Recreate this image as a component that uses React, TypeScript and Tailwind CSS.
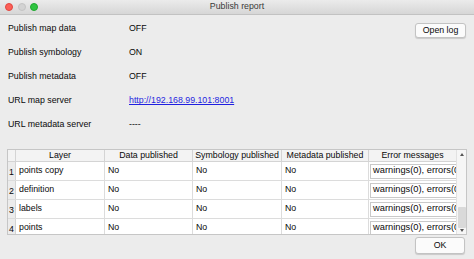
import React from "react";

const rows = [
  { n: 1, layer: "points copy" },
  { n: 2, layer: "definition" },
  { n: 3, layer: "labels" },
  { n: 4, layer: "points" },
];

const info: { label: string; value: React.ReactNode }[] = [
  { label: "Publish map data", value: "OFF" },
  { label: "Publish symbology", value: "ON" },
  { label: "Publish metadata", value: "OFF" },
  {
    label: "URL map server",
    value: <span className="text-[#1f1fe0] underline">http://192.168.99.101:8001</span>,
  },
  { label: "URL metadata server", value: "----" },
];

const cols = "grid grid-cols-[8px_89px_88px_89px_87px_88px]";

export default function App() {
  return (
    <div className="w-[474px] h-[259px] bg-[#ececec] flex flex-col overflow-hidden font-['Liberation_Sans',Arial,sans-serif] text-[8.8px] text-[#0a0a0a]">
      {/* title bar */}
      <div className="h-[15px] shrink-0 grid grid-cols-[60px_1fr_60px] items-center bg-gradient-to-b from-[#ebebeb] to-[#d6d6d6] border-b border-[#c2c2c2]">
        <div className="flex items-center gap-[4.5px] pl-[5px]">
          <span className="w-[8px] h-[8px] rounded-full bg-[#fc5f57] border border-[#e2463f]" />
          <span className="w-[8px] h-[8px] rounded-full bg-[#d3d3d3] border border-[#c4c4c4]" />
          <span className="w-[8px] h-[8px] rounded-full bg-[#2fc441] border border-[#1fa82f]" />
        </div>
        <div className="text-center text-[#3a3a3a]">Publish report</div>
        <div />
      </div>

      {/* info */}
      <div className="flex shrink-0">
        <div className="flex flex-col pt-[2px] pl-[8px] flex-1">
          {info.map((r) => (
            <div key={r.label} className="h-[24px] flex items-center">
              <div className="w-[121px]">{r.label}</div>
              <div>{r.value}</div>
            </div>
          ))}
        </div>
        <div className="pt-[8px] pr-[8px]">
          <button className="w-[51px] h-[15px] bg-[#fbfbfb] border border-[#c3c3c3] rounded-[3px] shadow-[0_1px_1px_rgba(0,0,0,0.15)] leading-none">
            Open log
          </button>
        </div>
      </div>

      {/* table */}
      <div className="mt-[12px] mx-[7px] h-[86px] shrink-0 flex border border-[#c6c6c6] bg-white overflow-hidden">
        <div className="flex-1 flex flex-col overflow-hidden">
          <div className={`${cols} h-[12px] shrink-0 bg-[#f3f3f3] border-b border-[#d4d4d4]`}>
            <div className="border-r border-[#d4d4d4]" />
            {["Layer", "Data published", "Symbology published", "Metadata published", "Error messages"].map((h) => (
              <div key={h} className="border-r border-[#d4d4d4] flex items-center justify-center whitespace-nowrap overflow-hidden">
                {h}
              </div>
            ))}
          </div>
          {rows.map((r) => (
            <div key={r.n} className={`${cols} h-[19px] shrink-0 border-b border-[#dcdcdc]`}>
              <div className="bg-[#ececec] border-r border-[#d4d4d4] flex items-center justify-center pt-[3px]">
                {r.n}
              </div>
              <div className="border-r border-[#dcdcdc] flex items-center pl-[3px]">{r.layer}</div>
              <div className="border-r border-[#dcdcdc] flex items-center pl-[3px]">No</div>
              <div className="border-r border-[#dcdcdc] flex items-center pl-[3px]">No</div>
              <div className="border-r border-[#dcdcdc] flex items-center pl-[3px]">No</div>
              <div className="flex items-center pl-[1px] overflow-hidden">
                <div className="h-[15px] w-[100px] shrink-0 border border-[#c9c9c9] bg-white flex items-center pl-[2px] whitespace-nowrap text-[9.3px]">
                  warnings(0), errors(0)
                </div>
              </div>
            </div>
          ))}
        </div>
        <div className="w-[10px] shrink-0 bg-[#f6f6f6] border-l border-[#e2e2e2] flex flex-col items-center">
          <span className="mt-[3px] w-0 h-0 border-l-[2.5px] border-r-[2.5px] border-b-[3px] border-l-transparent border-r-transparent border-b-[#555]" />
          <div className="flex-1" />
          <div className="w-[8px] h-[21px] bg-[#d9d9d9] rounded-[1px]" />
          <span className="mt-[1px] mb-[2px] w-0 h-0 border-l-[2.5px] border-r-[2.5px] border-t-[3px] border-l-transparent border-r-transparent border-t-[#555]" />
        </div>
      </div>

      {/* footer */}
      <div className="flex justify-end pr-[9px] pt-[2px]">
        <button className="w-[50px] h-[17px] bg-[#fbfbfb] border border-[#c3c3c3] rounded-[3px] shadow-[0_1px_1px_rgba(0,0,0,0.15)] leading-none">
          OK
        </button>
      </div>
    </div>
  );
}
